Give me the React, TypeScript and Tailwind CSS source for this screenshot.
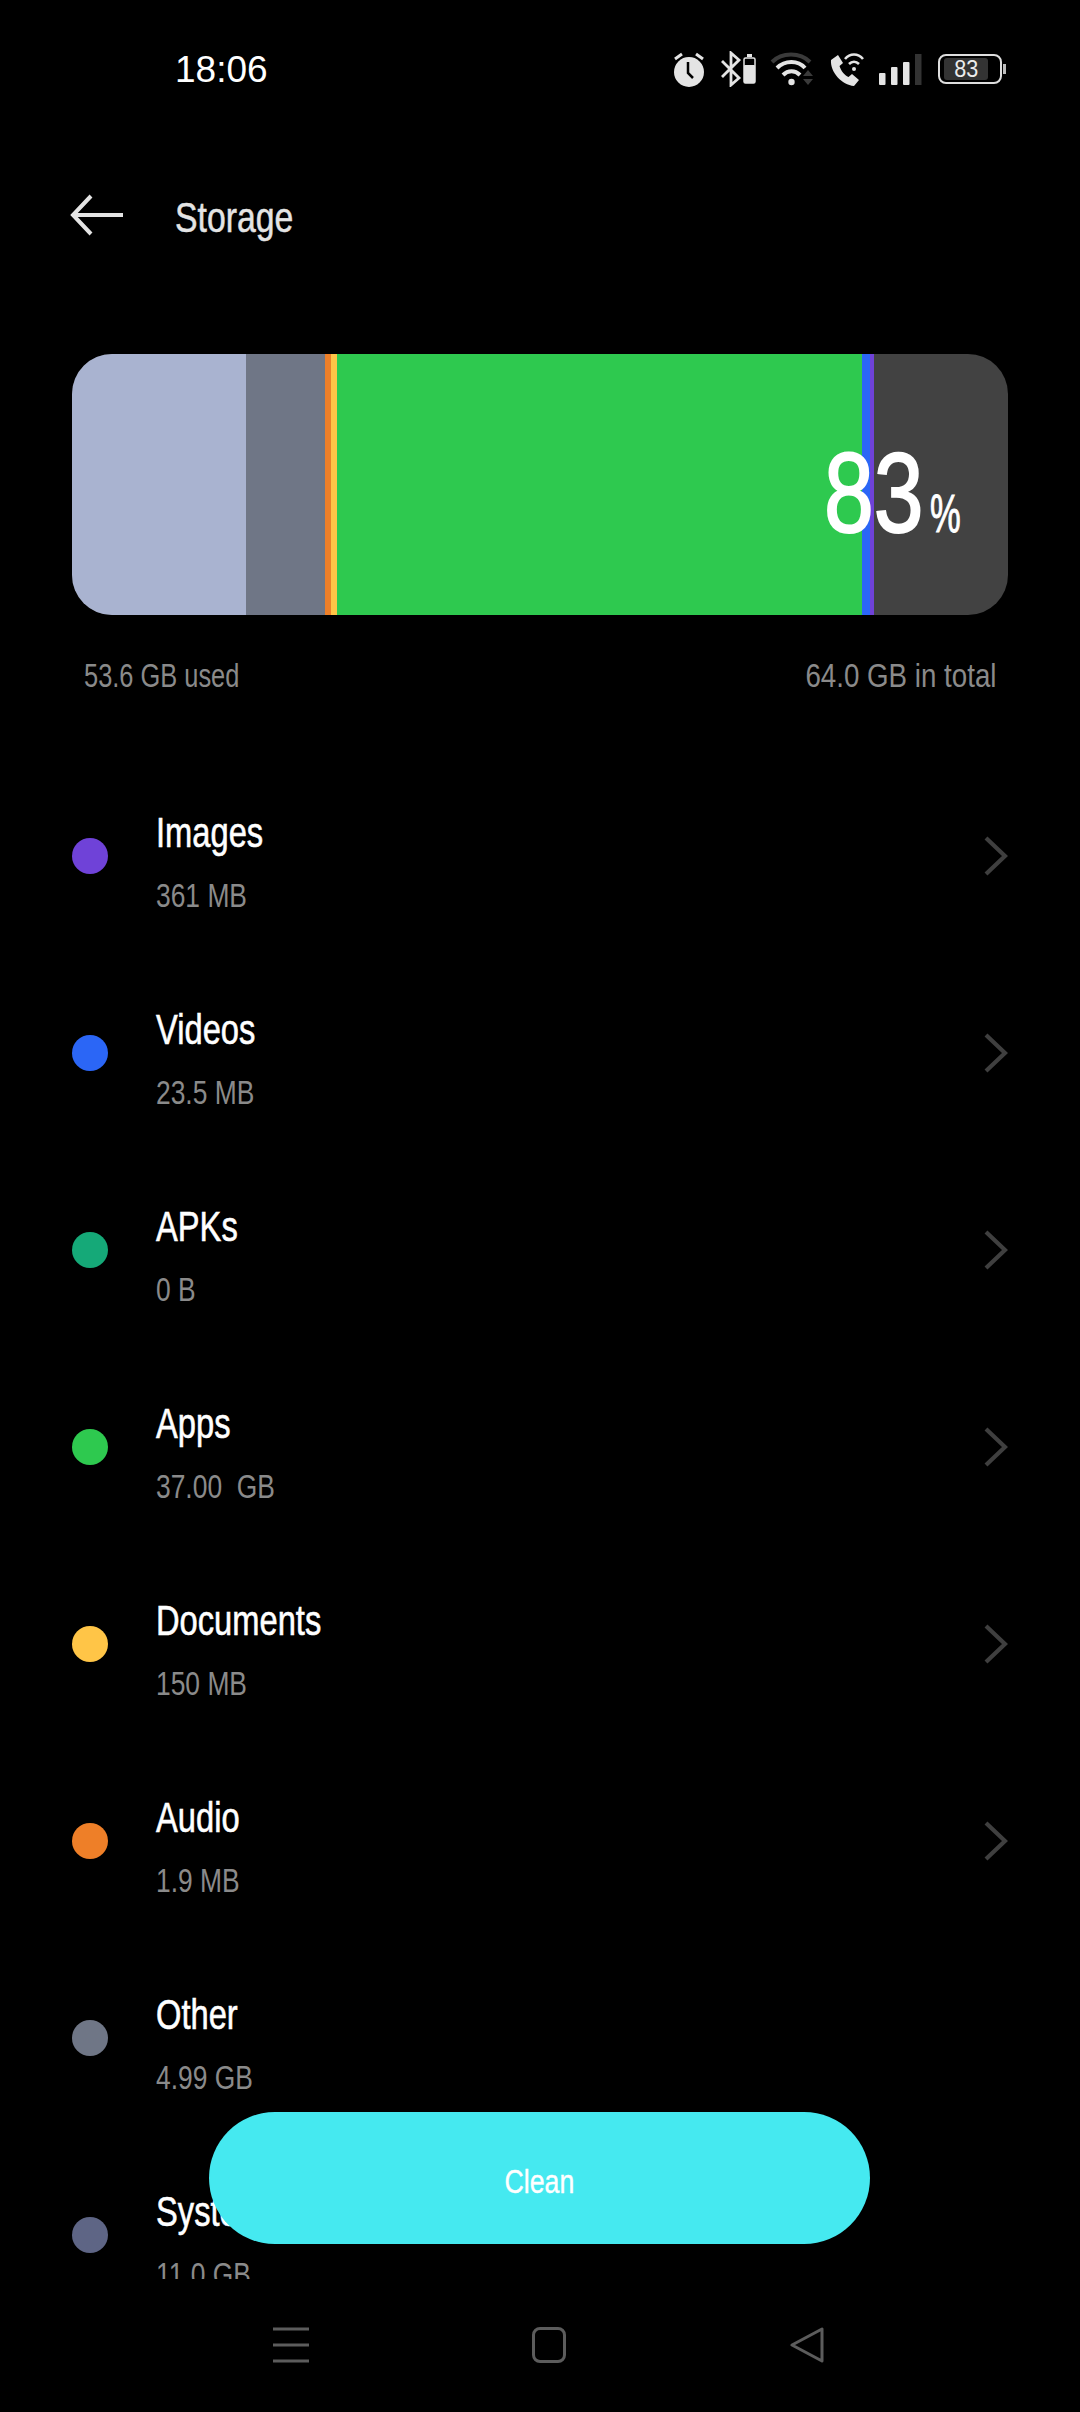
const rows = [
  { name: "Images", size: "361 MB", dot: "bg-[#6f42d8]", more: true },
  { name: "Videos", size: "23.5 MB", dot: "bg-[#2b66f6]", more: true },
  { name: "APKs", size: "0 B", dot: "bg-[#15a978]", more: true },
  { name: "Apps", size: "37.00  GB", dot: "bg-[#2ec94f]", more: true },
  { name: "Documents", size: "150 MB", dot: "bg-[#ffc547]", more: true },
  { name: "Audio", size: "1.9 MB", dot: "bg-[#ee7f28]", more: true },
  { name: "Other", size: "4.99 GB", dot: "bg-[#6f7686]", more: false },
  { name: "System", size: "11.0 GB", dot: "bg-[#5e6585]", more: false },
];

function StatusIcons() {
  return (
    <div className="flex items-center gap-[14px] text-[#e4e4e4]">
      {/* alarm */}
      <svg width="34" height="36" viewBox="0 0 34 36" fill="none">
        <circle cx="17" cy="21" r="15" fill="currentColor" />
        <path d="M16 11v11l5 5" stroke="#000" strokeWidth="2.5" />
        <path d="M3 8l7-5M31 8l-7-5" stroke="currentColor" strokeWidth="3" />
      </svg>
      {/* bluetooth + battery */}
      <svg width="36" height="36" viewBox="0 0 36 36" fill="none">
        <path d="M2 10l17 17-8 7V2l8 7L2 26" stroke="currentColor" strokeWidth="2.8" />
        <rect x="24" y="7" width="11" height="25" rx="1.5" stroke="currentColor" strokeWidth="1.5" />
        <rect x="24" y="14" width="11" height="18" rx="1" fill="currentColor" />
        <rect x="27" y="3" width="5" height="3" fill="currentColor" />
      </svg>
      {/* wifi */}
      <svg width="45" height="36" viewBox="0 0 45 36" fill="none">
        <path d="M2 11C12 1 30 1 40 11" stroke="#3a3a3a" strokeWidth="4" />
        <path d="M7 17C15 9 28 9 35 17" stroke="currentColor" strokeWidth="4" />
        <path d="M13 24C18 19 25 19 30 24" stroke="currentColor" strokeWidth="4" />
        <circle cx="21.5" cy="31" r="3.2" fill="currentColor" />
        <path d="M38 19l5 6h-10zM33 28h10l-5 6z" fill="#3a3a3a" />
      </svg>
      {/* call over wifi */}
      <svg width="36" height="36" viewBox="0 0 36 36" fill="none">
        <path
          d="M2 9l7-5 5 8-3.5 3c1.5 5 5 9 9 11l3.5-3 7 6-5 6C13 34 1 21 2 9z"
          fill="currentColor"
        />
        <path d="M16 8C21 2 29 2 34 8" stroke="currentColor" strokeWidth="2.6" />
        <path d="M20 13C23 10 27 10 30 13" stroke="currentColor" strokeWidth="2.6" />
        <circle cx="25" cy="18" r="2" fill="currentColor" />
      </svg>
      {/* signal */}
      <svg width="43" height="32" viewBox="0 0 43 32" fill="currentColor">
        <rect x="0" y="20" width="6.5" height="12" rx="1" />
        <rect x="12" y="14" width="6.5" height="18" rx="1" />
        <rect x="24" y="9" width="6.5" height="23" rx="1" />
        <rect x="36" y="1" width="6.5" height="31" fill="#333" />
      </svg>
      {/* battery */}
      <div className="ml-[2px] flex items-center">
        <div className="flex h-[30px] w-[64px] items-center rounded-[8px] border-2 border-[#dedede] pl-[4px]">
          <div className="flex h-[22px] w-[44px] items-center justify-center rounded-[3px] bg-[#333333] text-[24px] leading-none text-[#ececec]">
            <span className="inline-block scale-x-[0.9]">83</span>
          </div>
        </div>
        <div className="ml-[1px] h-[10px] w-[3px] bg-[#bdbdbd]" />
      </div>
    </div>
  );
}

export default function App() {
  return (
    <div className="relative flex h-[2412px] w-[1080px] flex-col overflow-hidden bg-black font-['Liberation_Sans',sans-serif]">
      {/* Status bar */}
      <div className="flex h-[138px] shrink-0 items-center justify-between pl-[175px] pr-[74px]">
        <span className="text-[37px] leading-none text-white">18:06</span>
        <StatusIcons />
      </div>

      {/* Title */}
      <div className="mt-[22px] flex h-[110px] shrink-0 items-center pl-[70px]">
        <svg width="54" height="42" viewBox="0 0 54 42" fill="none" className="text-[#e4e4e4]">
          <path d="M53 21H3M21 2L3 21l18 19" stroke="currentColor" strokeWidth="4" />
        </svg>
        <span className="ml-[51px] inline-block origin-left scale-x-[0.785] pt-[4px] text-[43px] leading-none text-[#e4e4e4] [-webkit-text-stroke:0.5px_#e4e4e4]">
          Storage
        </span>
      </div>

      {/* Usage bar */}
      <div className="relative mx-[72px] mt-[84px] flex h-[261px] shrink-0 overflow-hidden rounded-[40px] bg-[#424242]">
        <div className="w-[174px] bg-[#a9b3d0]" />
        <div className="w-[79px] bg-[#6f7686]" />
        <div className="w-[6px] bg-[#ee7f28]" />
        <div className="w-[6px] bg-[#ffc547]" />
        <div className="w-[525px] bg-[#2ec94f]" />
        <div className="w-[8px] bg-[#2b66f6]" />
        <div className="w-[4px] bg-[#6f42d8]" />
        <div className="absolute left-[752px] top-[82px] flex items-baseline text-white">
          <span className="inline-block w-[106px] origin-left scale-x-[0.785] text-[114px] leading-[114px] [-webkit-text-stroke:2px_#ffffff]">
            83
          </span>
          <span className="inline-block origin-left scale-x-[0.64] text-[54px] leading-none [-webkit-text-stroke:1px_#ffffff]">
            %
          </span>
        </div>
      </div>

      <div className="mt-[41px] flex h-[40px] shrink-0 items-center justify-between px-[84px] text-[33px] leading-[40px] text-[#8a8a8a]">
        <span className="inline-block origin-left scale-x-[0.77]">53.6 GB used</span>
        <span className="inline-block origin-right scale-x-[0.84]">64.0 GB in total</span>
      </div>

      {/* Categories */}
      <div className="mt-[61px] min-h-0 flex-1 overflow-hidden">
        {rows.map((row) => (
          <div key={row.name} className="flex h-[197px] items-center px-[72px]">
            <div className={`h-[36px] w-[36px] shrink-0 rounded-full ${row.dot}`} />
            <div className="ml-[48px] flex flex-col items-start pt-[16px]">
              <span className="inline-block origin-left scale-x-[0.76] text-[43px] leading-[50px] text-white [-webkit-text-stroke:0.6px_#ffffff]">
                {row.name}
              </span>
              <span className="mt-[14px] inline-block origin-left scale-x-[0.8] whitespace-pre text-[33px] leading-[50px] text-[#8a8a8a]">
                {row.size}
              </span>
            </div>
            {row.more ? (
              <svg width="24" height="42" viewBox="0 0 24 42" fill="none" className="ml-auto">
                <path d="M2 3l19 18L2 39" stroke="#3f3f3f" strokeWidth="4.2" />
              </svg>
            ) : null}
          </div>
        ))}
      </div>

      {/* Navigation bar */}
      <div className="flex h-[133px] shrink-0 items-start justify-center pl-[18px] pt-[48px] text-[#5c5c5c]">
        <div className="flex w-[258px] justify-center">
          <svg width="36" height="36" viewBox="0 0 36 36" stroke="currentColor" strokeWidth="3">
            <path d="M0 2h36M0 18h36M0 34h36" />
          </svg>
        </div>
        <div className="flex w-[258px] justify-center">
          <div className="h-[36px] w-[34px] rounded-[8px] border-[3px] border-[#5c5c5c]" />
        </div>
        <div className="flex w-[258px] justify-center">
          <svg width="34" height="36" viewBox="0 0 34 36" fill="none" stroke="currentColor" strokeWidth="3" strokeLinejoin="round">
            <path d="M32 2v32L2 18z" />
          </svg>
        </div>
      </div>

      {/* Clean button */}
      <div className="absolute bottom-[168px] left-[209px] flex h-[132px] w-[661px] items-center justify-center rounded-full bg-[#45e9f0] pt-[6px] text-[34px] leading-none text-white">
        <span className="inline-block scale-x-[0.785] [-webkit-text-stroke:0.4px_#ffffff]">Clean</span>
      </div>
    </div>
  );
}
